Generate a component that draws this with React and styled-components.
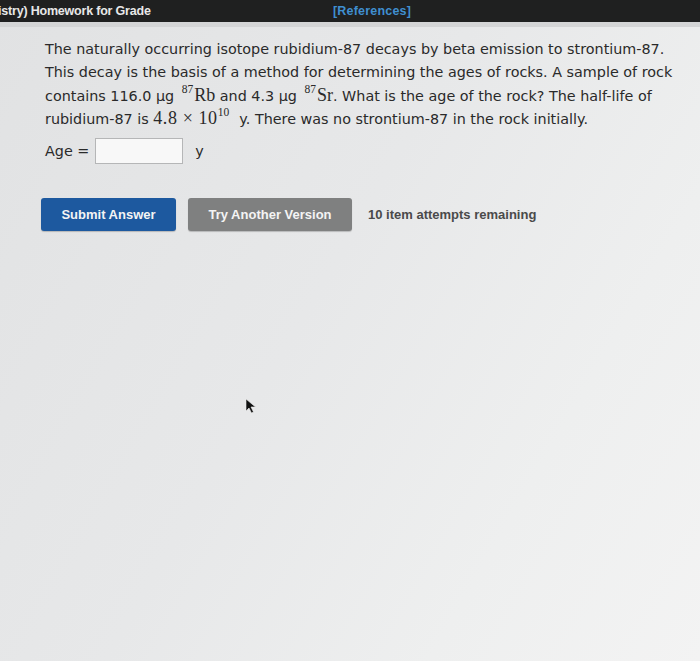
import React from 'react';
import styled, { createGlobalStyle } from 'styled-components';

const GlobalStyle = createGlobalStyle`
  html, body {
    margin: 0;
    padding: 0;
  }
  body {
    background: #e6e7e8;
    font-family: "DejaVu Sans", Verdana, sans-serif;
  }
`;

const Page = styled.div`
  position: relative;
  width: 700px;
  height: 661px;
  overflow: hidden;
  background: linear-gradient(120deg, #e1e2e3 0%, #e7e8e9 45%, #eeefef 75%, #f3f3f3 100%);
`;

const TopBar = styled.div`
  height: 22px;
  background: #1f2020;
  display: flex;
  align-items: center;
  font-family: "Liberation Sans", Arial, sans-serif;
  font-weight: bold;
  font-size: 12.5px;
  border-bottom: 5px solid #d4d5d6;
`;

const Title = styled.div`
  color: #e8e8e8;
  width: 335px;
  margin-left: -2px;
  letter-spacing: -0.2px;
  white-space: nowrap;
`;

const RefLink = styled.div`
  color: #3f8fd0;
  font-size: 12.5px;
  letter-spacing: 0.2px;
`;

const Content = styled.div`
  padding: 11px 0 0 45px;
`;

const Question = styled.p`
  margin: 0;
  width: 640px;
  font-size: 14.35px;
  line-height: 23.3px;
  color: #2a2a2a;
`;

const Serif = styled.span`
  font-family: "Liberation Serif", "Times New Roman", serif;
  font-size: 18px;
  line-height: 0;
  letter-spacing: ${p => p.$ls || 0}px;
`;

const Sup = styled.span`
  font-family: "Liberation Serif", "Times New Roman", serif;
  font-size: 11.5px;
  line-height: 0;
  vertical-align: 8px;
  margin-left: ${p => p.$gap || 0}px;
  margin-right: 1px;
`;

const AnswerRow = styled.div`
  display: flex;
  align-items: center;
  margin-top: 7px;
  font-size: 14.35px;
  color: #2a2a2a;
`;

const Label = styled.span`
  margin-right: 6px;
`;

const Input = styled.div`
  width: 86px;
  height: 24px;
  border: 1px solid #b5b6b7;
  background: #f8f8f8;
  margin-right: 12px;
`;

const Actions = styled.div`
  display: flex;
  align-items: center;
  margin: 34px 0 0 -4px;
  gap: 12px;
`;

const Button = styled.div`
  height: 33px;
  display: flex;
  align-items: center;
  justify-content: center;
  width: ${p => p.$w}px;
  border-radius: 3px;
  background: ${p => p.$bg};
  color: #f4f4f4;
  font-family: "Liberation Sans", Arial, sans-serif;
  font-weight: bold;
  font-size: 13px;
  box-shadow: 0 1px 1px rgba(0, 0, 0, 0.2);
`;

const Remaining = styled.span`
  margin-left: 4px;
  font-family: "Liberation Sans", Arial, sans-serif;
  font-weight: bold;
  font-size: 13px;
  color: #4a4a4a;
`;

const Cursor = styled.svg`
  position: absolute;
  left: 245px;
  top: 398px;
`;

export default function App() {
  return (
    <Page>
      <GlobalStyle />
      <TopBar>
        <Title>istry) Homework for Grade</Title>
        <RefLink>[References]</RefLink>
      </TopBar>
      <Content>
        <Question>
          The naturally occurring isotope rubidium-87 decays by beta emission to strontium-87.
          This decay is the basis of a method for determining the ages of rocks. A sample of rock
          contains 116.0 μg <Sup $gap={3}>87</Sup><Serif>Rb</Serif> and 4.3 μg <Sup $gap={3}>87</Sup><Serif>Sr</Serif>. What is the age of the rock? The half-life of
          rubidium-87 is <Serif $ls={0.6}>4.8 × 10</Serif><Sup>10</Sup>&nbsp; y. There was no strontium-87 in the rock initially.
        </Question>
        <AnswerRow>
          <Label>Age =</Label>
          <Input />
          <span>y</span>
        </AnswerRow>
        <Actions>
          <Button $w={135} $bg="#1d599f">Submit Answer</Button>
          <Button $w={164} $bg="#7f8080">Try Another Version</Button>
          <Remaining>10 item attempts remaining</Remaining>
        </Actions>
      </Content>
      <Cursor width="12" height="16" viewBox="0 0 12 16">
        <path d="M1 1 L1 13 L4 10 L6.5 15 L8.5 14 L6 9 L10.5 9 Z" fill="#111" stroke="#eee" strokeWidth="0.6" />
      </Cursor>
    </Page>
  );
}
